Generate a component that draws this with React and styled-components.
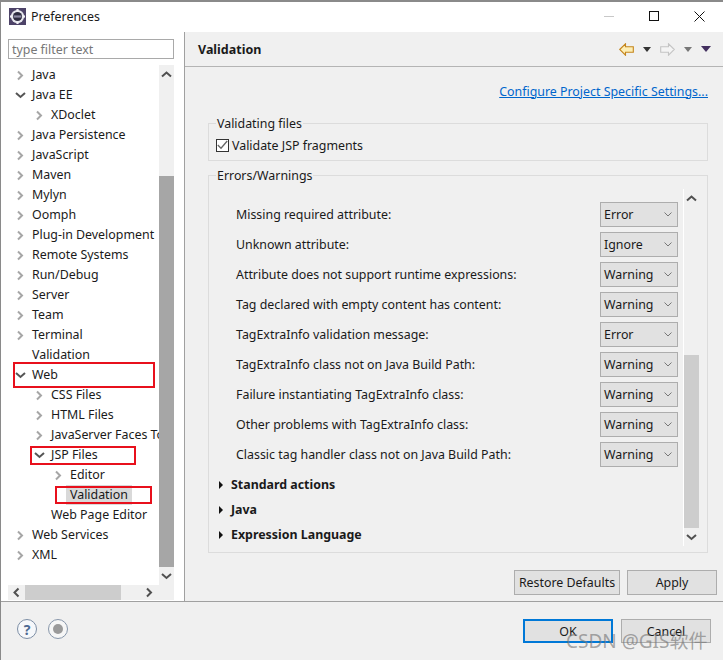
import React from "react";
import styled, { createGlobalStyle } from "styled-components";

const GlobalStyle = createGlobalStyle`
  html, body {
    margin: 0;
    padding: 0;
    background: #f0f0f0;
  }
  * {
    box-sizing: border-box;
  }
`;

const treeRows = [
  { label: "Java", depth: 0, arrow: "right" },
  { label: "Java EE", depth: 0, arrow: "down" },
  { label: "XDoclet", depth: 1, arrow: "right" },
  { label: "Java Persistence", depth: 0, arrow: "right" },
  { label: "JavaScript", depth: 0, arrow: "right" },
  { label: "Maven", depth: 0, arrow: "right" },
  { label: "Mylyn", depth: 0, arrow: "right" },
  { label: "Oomph", depth: 0, arrow: "right" },
  { label: "Plug-in Development", depth: 0, arrow: "right" },
  { label: "Remote Systems", depth: 0, arrow: "right" },
  { label: "Run/Debug", depth: 0, arrow: "right" },
  { label: "Server", depth: 0, arrow: "right" },
  { label: "Team", depth: 0, arrow: "right" },
  { label: "Terminal", depth: 0, arrow: "right" },
  { label: "Validation", depth: 0 },
  { label: "Web", depth: 0, arrow: "down" },
  { label: "CSS Files", depth: 1, arrow: "right" },
  { label: "HTML Files", depth: 1, arrow: "right" },
  { label: "JavaServer Faces Tools", depth: 1, arrow: "right" },
  { label: "JSP Files", depth: 1, arrow: "down" },
  { label: "Editor", depth: 2, arrow: "right" },
  { label: "Validation", depth: 2, selected: true },
  { label: "Web Page Editor", depth: 1 },
  { label: "Web Services", depth: 0, arrow: "right" },
  { label: "XML", depth: 0, arrow: "right" },
];

const problems = [
  ["Missing required attribute:", "Error"],
  ["Unknown attribute:", "Ignore"],
  ["Attribute does not support runtime expressions:", "Warning"],
  ["Tag declared with empty content has content:", "Warning"],
  ["TagExtraInfo validation message:", "Error"],
  ["TagExtraInfo class not on Java Build Path:", "Warning"],
  ["Failure instantiating TagExtraInfo class:", "Warning"],
  ["Other problems with TagExtraInfo class:", "Warning"],
  ["Classic tag handler class not on Java Build Path:", "Warning"],
];

const sections = ["Standard actions", "Java", "Expression Language"];

const highlights = [
  { x: 13, y: 362, w: 142, h: 26 },
  { x: 30, y: 446, w: 106, h: 19 },
  { x: 55, y: 486, w: 97, h: 18 },
];

const Chevron = ({ dir, color = "#a6a6a6", width = 2 }) => {
  const points = {
    right: "3,1.5 7,5.5 3,9.5",
    down: "1,3 5.5,7 10,3",
    up: "1,7.5 5.5,3.5 10,7.5",
    left: "7.5,1.5 3.5,5.5 7.5,9.5",
  };
  return (
    <svg width="11" height="11" viewBox="0 0 11 11">
      <polyline points={points[dir]} fill="none" stroke={color} strokeWidth={width} />
    </svg>
  );
};

const ComboChevron = () => (
  <svg width="8" height="5" viewBox="0 0 8 5">
    <polyline points="0.5,0.5 4,4 7.5,0.5" fill="none" stroke="#777" strokeWidth="1" />
  </svg>
);

const AppIcon = () => (
  <svg width="17" height="17" viewBox="0 0 17 17">
    <rect width="17" height="17" fill="#4d4368" />
    <circle cx="8.5" cy="8.5" r="6.6" fill="#e8e8ee" />
    <circle cx="8.5" cy="8.5" r="4.6" fill="#2e2c40" />
    <rect x="7.4" y="1" width="2.2" height="2.4" fill="#f4f4f8" />
    <rect x="7.4" y="13.6" width="2.2" height="2.4" fill="#f4f4f8" />
    <rect x="1" y="7.4" width="2.4" height="2.2" fill="#f4f4f8" />
    <rect x="13.6" y="7.4" width="2.4" height="2.2" fill="#f4f4f8" />
    <rect x="4.6" y="7.4" width="7.8" height="2.2" fill="#8d8aa3" />
  </svg>
);

const ArrowIcon = ({ flip, fill, stroke }) => (
  <FlipSvg $flip={flip} width="15" height="13" viewBox="0 0 15 13">
    <path d="M0.7 6.5 L6.5 0.8 V3.8 H14.3 V9.2 H6.5 V12.2 Z" fill={fill} stroke={stroke} strokeWidth="1.1" />
  </FlipSvg>
);

const Caret = ({ w = 8, h = 5, color = "#333" }) => (
  <svg width={w} height={h} viewBox={`0 0 ${w} ${h}`}>
    <polygon points={`0,0 ${w},0 ${w / 2},${h}`} fill={color} />
  </svg>
);

const App = () => {
  return (
    <Window>
      <GlobalStyle />
      <TitleBar>
        <AppIcon />
        <TitleText>Preferences</TitleText>
        <WindowControls>
          <MinimizeGlyph />
          <MaximizeGlyph />
          <svg width="11" height="11" viewBox="0 0 11 11">
            <path d="M0.5 0.5 L10.5 10.5 M10.5 0.5 L0.5 10.5" stroke="#111" strokeWidth="1" />
          </svg>
        </WindowControls>
      </TitleBar>

      <Main>
        <Sidebar>
          <FilterInput placeholder="type filter text" readOnly />
          <TreeArea>
            <Tree>
              {treeRows.map((row, i) => (
                <TreeRow key={i} $depth={row.depth}>
                  <ArrowSlot>
                    {row.arrow === "right" && <Chevron dir="right" />}
                    {row.arrow === "down" && <Chevron dir="down" color="#555" />}
                  </ArrowSlot>
                  <TreeLabel $selected={row.selected}>{row.label}</TreeLabel>
                </TreeRow>
              ))}
            </Tree>
            <VScroll>
              <ScrollArrow $height={19}>
                <Chevron dir="up" color="#505050" />
              </ScrollArrow>
              <VThumbDark />
              <ScrollArrow $height={18}>
                <Chevron dir="down" color="#505050" />
              </ScrollArrow>
            </VScroll>
          </TreeArea>
          <HScroll>
            <HArrow>
              <Chevron dir="left" color="#505050" />
            </HArrow>
            <HThumb />
            <HArrow>
              <Chevron dir="right" color="#505050" />
            </HArrow>
            <ScrollCorner />
          </HScroll>
        </Sidebar>

        <Content>
          <PageHeader>
            <PageTitle>Validation</PageTitle>
            <PageTools>
              <ArrowIcon fill="#fdeeb5" stroke="#c4851c" />
              <Caret color="#333" />
              <ArrowIcon flip fill="#f4f4f4" stroke="#c4c4c4" />
              <Caret color="#777" />
              <Caret w={10} h={6} color="#43305f" />
            </PageTools>
          </PageHeader>

          <PageBody>
            <LinkRow>
              <ProjectLink href="#">Configure Project Specific Settings...</ProjectLink>
            </LinkRow>

            <FilesGroup>
              <GroupLegend>Validating files</GroupLegend>
              <CheckRow>
                <CheckBox>
                  <svg width="11" height="10" viewBox="0 0 11 10">
                    <polyline points="0.8,5 4,8.2 10.2,1" fill="none" stroke="#666" strokeWidth="1.3" />
                  </svg>
                </CheckBox>
                Validate JSP fragments
              </CheckRow>
            </FilesGroup>

            <ErrorsGroup>
              <GroupLegend>Errors/Warnings</GroupLegend>
              <ErrorsInner>
                <ProblemList>
                  {problems.map(([label, value]) => (
                    <ProblemRow key={label}>
                      {label}
                      <Combo>
                        {value}
                        <ComboChevron />
                      </Combo>
                    </ProblemRow>
                  ))}
                  <SectionList>
                    {sections.map((name) => (
                      <SectionRow key={name}>
                        <Triangle />
                        {name}
                      </SectionRow>
                    ))}
                  </SectionList>
                </ProblemList>
                <ListScroll>
                  <ScrollArrow $height={18}>
                    <Chevron dir="up" color="#505050" />
                  </ScrollArrow>
                  <ListThumb />
                  <ScrollArrow $height={18}>
                    <Chevron dir="down" color="#505050" />
                  </ScrollArrow>
                </ListScroll>
              </ErrorsInner>
            </ErrorsGroup>

            <PageButtons>
              <Button $width={106}>Restore Defaults</Button>
              <Button $width={90}>Apply</Button>
            </PageButtons>
          </PageBody>
        </Content>
      </Main>

      <Footer>
        <FooterIcons>
          <HelpIcon>?</HelpIcon>
          <RecordIcon>
            <RecordDot />
          </RecordIcon>
        </FooterIcons>
        <FooterButtons>
          <OkButton $width={90} $height={24}>OK</OkButton>
          <Button $width={90} $height={24}>Cancel</Button>
        </FooterButtons>
      </Footer>

      {highlights.map((box) => (
        <RedBox
          key={box.y}
          style={{ left: box.x, top: box.y, width: box.w, height: box.h }}
        />
      ))}
      <Watermark>CSDN @GIS软件</Watermark>
    </Window>
  );
};

export default App;

const uiFont = `"Noto Sans", "Noto Sans CJK SC", sans-serif`;

const Window = styled.div`
  position: relative;
  width: 723px;
  height: 660px;
  display: flex;
  flex-direction: column;
  overflow: hidden;
  background: #f0f0f0;
  border-left: 1px solid #8a8a8a;
  border-top: 2px solid #8a8a8a;
  font-family: ${uiFont};
  font-size: 12.4px;
  color: #1a1a1a;
`;

//------------------------------------>
//title bar
const TitleBar = styled.div`
  height: 30px;
  flex: none;
  display: flex;
  align-items: center;
  padding: 0 0 2px 8px;
  background: #fff;
`;

const TitleText = styled.div`
  margin-left: 5px;
`;

const WindowControls = styled.div`
  margin-left: auto;
  display: flex;
  align-items: center;
  gap: 35px;
  padding-right: 18px;
`;

const MinimizeGlyph = styled.div`
  width: 10px;
  height: 1px;
  background: #c8c8c8;
`;

const MaximizeGlyph = styled.div`
  width: 10px;
  height: 10px;
  border: 1px solid #111;
`;

//------------------------------------>
//layout
const Main = styled.div`
  flex: 1;
  min-height: 0;
  display: flex;
  border-bottom: 1px solid #a0a0a0;
`;

const Sidebar = styled.div`
  width: 184px;
  flex: none;
  display: flex;
  flex-direction: column;
  padding: 7px 10px 1px 7px;
  background: #fff;
  border-right: 1px solid #a0a0a0;
`;

const FilterInput = styled.input`
  width: 100%;
  height: 20px;
  flex: none;
  padding: 0 3px;
  border: 1px solid #a9a9a9;
  outline: none;
  font-family: ${uiFont};
  font-size: 12.4px;
  &::placeholder {
    color: #777;
    opacity: 1;
  }
`;

const TreeArea = styled.div`
  flex: 1;
  min-height: 0;
  margin-top: 6px;
  display: flex;
`;

const Tree = styled.div`
  flex: 1;
  min-width: 0;
  overflow: hidden;
`;

const TreeRow = styled.div`
  height: 20px;
  display: flex;
  align-items: center;
  padding-left: ${(props) => props.$depth * 19}px;
  white-space: nowrap;
`;

const ArrowSlot = styled.div`
  width: 24px;
  flex: none;
  display: flex;
  justify-content: center;
  align-items: center;
`;

const TreeLabel = styled.span`
  background: ${(props) => (props.$selected ? "#d9d9d9" : "transparent")};
  margin-left: ${(props) => (props.$selected ? "-4px" : "0")};
  padding: ${(props) => (props.$selected ? "0 4px" : "0")};
  line-height: 20px;
`;

const VScroll = styled.div`
  width: 15px;
  flex: none;
  display: flex;
  flex-direction: column;
  background: #f0f0f0;
`;

const ScrollArrow = styled.div`
  height: ${(props) => props.$height}px;
  flex: none;
  display: flex;
  align-items: center;
  justify-content: center;
`;

const VThumbDark = styled.div`
  height: 391px;
  margin-top: 92px;
  background: #a6a6a6;
  flex: none;
  margin-bottom: auto;
`;

const HScroll = styled.div`
  height: 15px;
  flex: none;
  display: flex;
  background: #f0f0f0;
`;

const HArrow = styled.div`
  width: 17px;
  flex: none;
  display: flex;
  align-items: center;
  justify-content: center;
`;

const HThumb = styled.div`
  width: 96px;
  flex: none;
  margin-right: 20px;
  background: #cdcdcd;
`;

const ScrollCorner = styled.div`
  flex: 1;
`;

//------------------------------------>
//right page
const Content = styled.div`
  flex: 1;
  min-width: 0;
  display: flex;
  flex-direction: column;
`;

const PageHeader = styled.div`
  height: 35px;
  flex: none;
  display: flex;
  align-items: center;
  justify-content: space-between;
  padding: 0 12px 0 13px;
  border-bottom: 1px solid #b4b4b4;
`;

const PageTitle = styled.div`
  font-size: 12.5px;
  font-weight: 700;
`;

const PageTools = styled.div`
  display: flex;
  align-items: center;
  gap: 9px;
`;

const FlipSvg = styled.svg`
  transform: ${(props) => (props.$flip ? "scaleX(-1)" : "none")};
`;

const PageBody = styled.div`
  flex: 1;
  min-height: 0;
  display: flex;
  flex-direction: column;
  padding: 0 6px 0 23px;
`;

const LinkRow = styled.div`
  height: 18px;
  margin-top: 15px;
  padding-right: 9px;
  display: flex;
  justify-content: flex-end;
  align-items: center;
`;

const ProjectLink = styled.a`
  color: #0066cc;
  text-decoration: underline;
`;

const FilesGroup = styled.fieldset`
  width: 500px;
  height: 48px;
  margin: 13px 0 0;
  padding: 3px 7px 0;
  border: 1px solid #dcdcdc;
  min-width: 0;
`;

const GroupLegend = styled.legend`
  margin-left: 0;
  padding: 2px 1px 0;
  line-height: 18px;
`;

const CheckRow = styled.div`
  display: flex;
  align-items: center;
  height: 18px;
  gap: 3px;
`;

const CheckBox = styled.div`
  width: 13px;
  height: 13px;
  display: flex;
  align-items: center;
  justify-content: center;
  background: #fff;
  border: 1px solid #333;
`;

const ErrorsGroup = styled.fieldset`
  width: 500px;
  height: 388px;
  margin: 4px 0 0;
  padding: 4px 8px 5px 7px;
  border: 1px solid #dcdcdc;
  min-width: 0;
`;

const ErrorsInner = styled.div`
  height: 357px;
  display: flex;
`;

const ProblemList = styled.div`
  flex: 1;
  min-width: 0;
  padding: 10px 0 0 20px;
`;

const ProblemRow = styled.div`
  height: 30px;
  display: flex;
  align-items: center;
  justify-content: space-between;
  padding-right: 6px;
`;

const Combo = styled.div`
  width: 78px;
  height: 25px;
  display: flex;
  align-items: center;
  justify-content: space-between;
  padding: 0 5px 0 3px;
  background: #e1e1e1;
  border: 1px solid #adadad;
`;

const SectionList = styled.div`
  margin-left: -17px;
  padding-top: 3px;
`;

const SectionRow = styled.div`
  height: 25px;
  display: flex;
  align-items: center;
  gap: 8px;
  font-weight: 700;
`;

const Triangle = styled.div`
  width: 0;
  height: 0;
  border-left: 4px solid #111;
  border-top: 4px solid transparent;
  border-bottom: 4px solid transparent;
`;

const ListScroll = styled.div`
  width: 15px;
  flex: none;
  display: flex;
  flex-direction: column;
  box-shadow: -1px 0 0 #fff;
`;

const ListThumb = styled.div`
  height: 173px;
  margin-top: 148px;
  margin-bottom: auto;
  background: #cdcdcd;
`;

const PageButtons = styled.div`
  margin-top: 17px;
  display: flex;
  justify-content: flex-end;
  gap: 7px;
`;

const Button = styled.div`
  width: ${(props) => props.$width}px;
  height: ${(props) => props.$height || 25}px;
  display: flex;
  align-items: center;
  justify-content: center;
  background: #e1e1e1;
  border: 1px solid #adadad;
`;

const OkButton = styled(Button)`
  border: 2px solid #0078d7;
`;

//------------------------------------>
//footer
const Footer = styled.div`
  height: 58px;
  flex: none;
  display: flex;
  align-items: flex-start;
  justify-content: space-between;
  padding: 17px 12px 0 16px;
`;

const FooterIcons = styled.div`
  display: flex;
  align-items: center;
  gap: 11px;
`;

const HelpIcon = styled.div`
  width: 20px;
  height: 20px;
  border-radius: 50%;
  border: 1.5px solid #7d8ea5;
  background: #f6f8fb;
  display: flex;
  align-items: center;
  justify-content: center;
  color: #4d6a92;
  font-size: 14px;
  font-weight: 700;
`;

const RecordIcon = styled.div`
  width: 20px;
  height: 20px;
  border-radius: 50%;
  border: 1.5px solid #8796aa;
  background: #f6f6f6;
  display: flex;
  align-items: center;
  justify-content: center;
`;

const RecordDot = styled.div`
  width: 10px;
  height: 10px;
  border-radius: 50%;
  background: #9a9a9a;
`;

const FooterButtons = styled.div`
  display: flex;
  gap: 8px;
`;

//------------------------------------>
//overlays
const RedBox = styled.div`
  position: absolute;
  margin: -2px 0 0 -1px;
  border: 2px solid #e8101c;
  pointer-events: none;
`;

const Watermark = styled.div`
  position: absolute;
  left: 565px;
  top: 626px;
  font-size: 19px;
  line-height: 26px;
  color: rgba(120, 120, 120, 0.65);
  white-space: nowrap;
`;
